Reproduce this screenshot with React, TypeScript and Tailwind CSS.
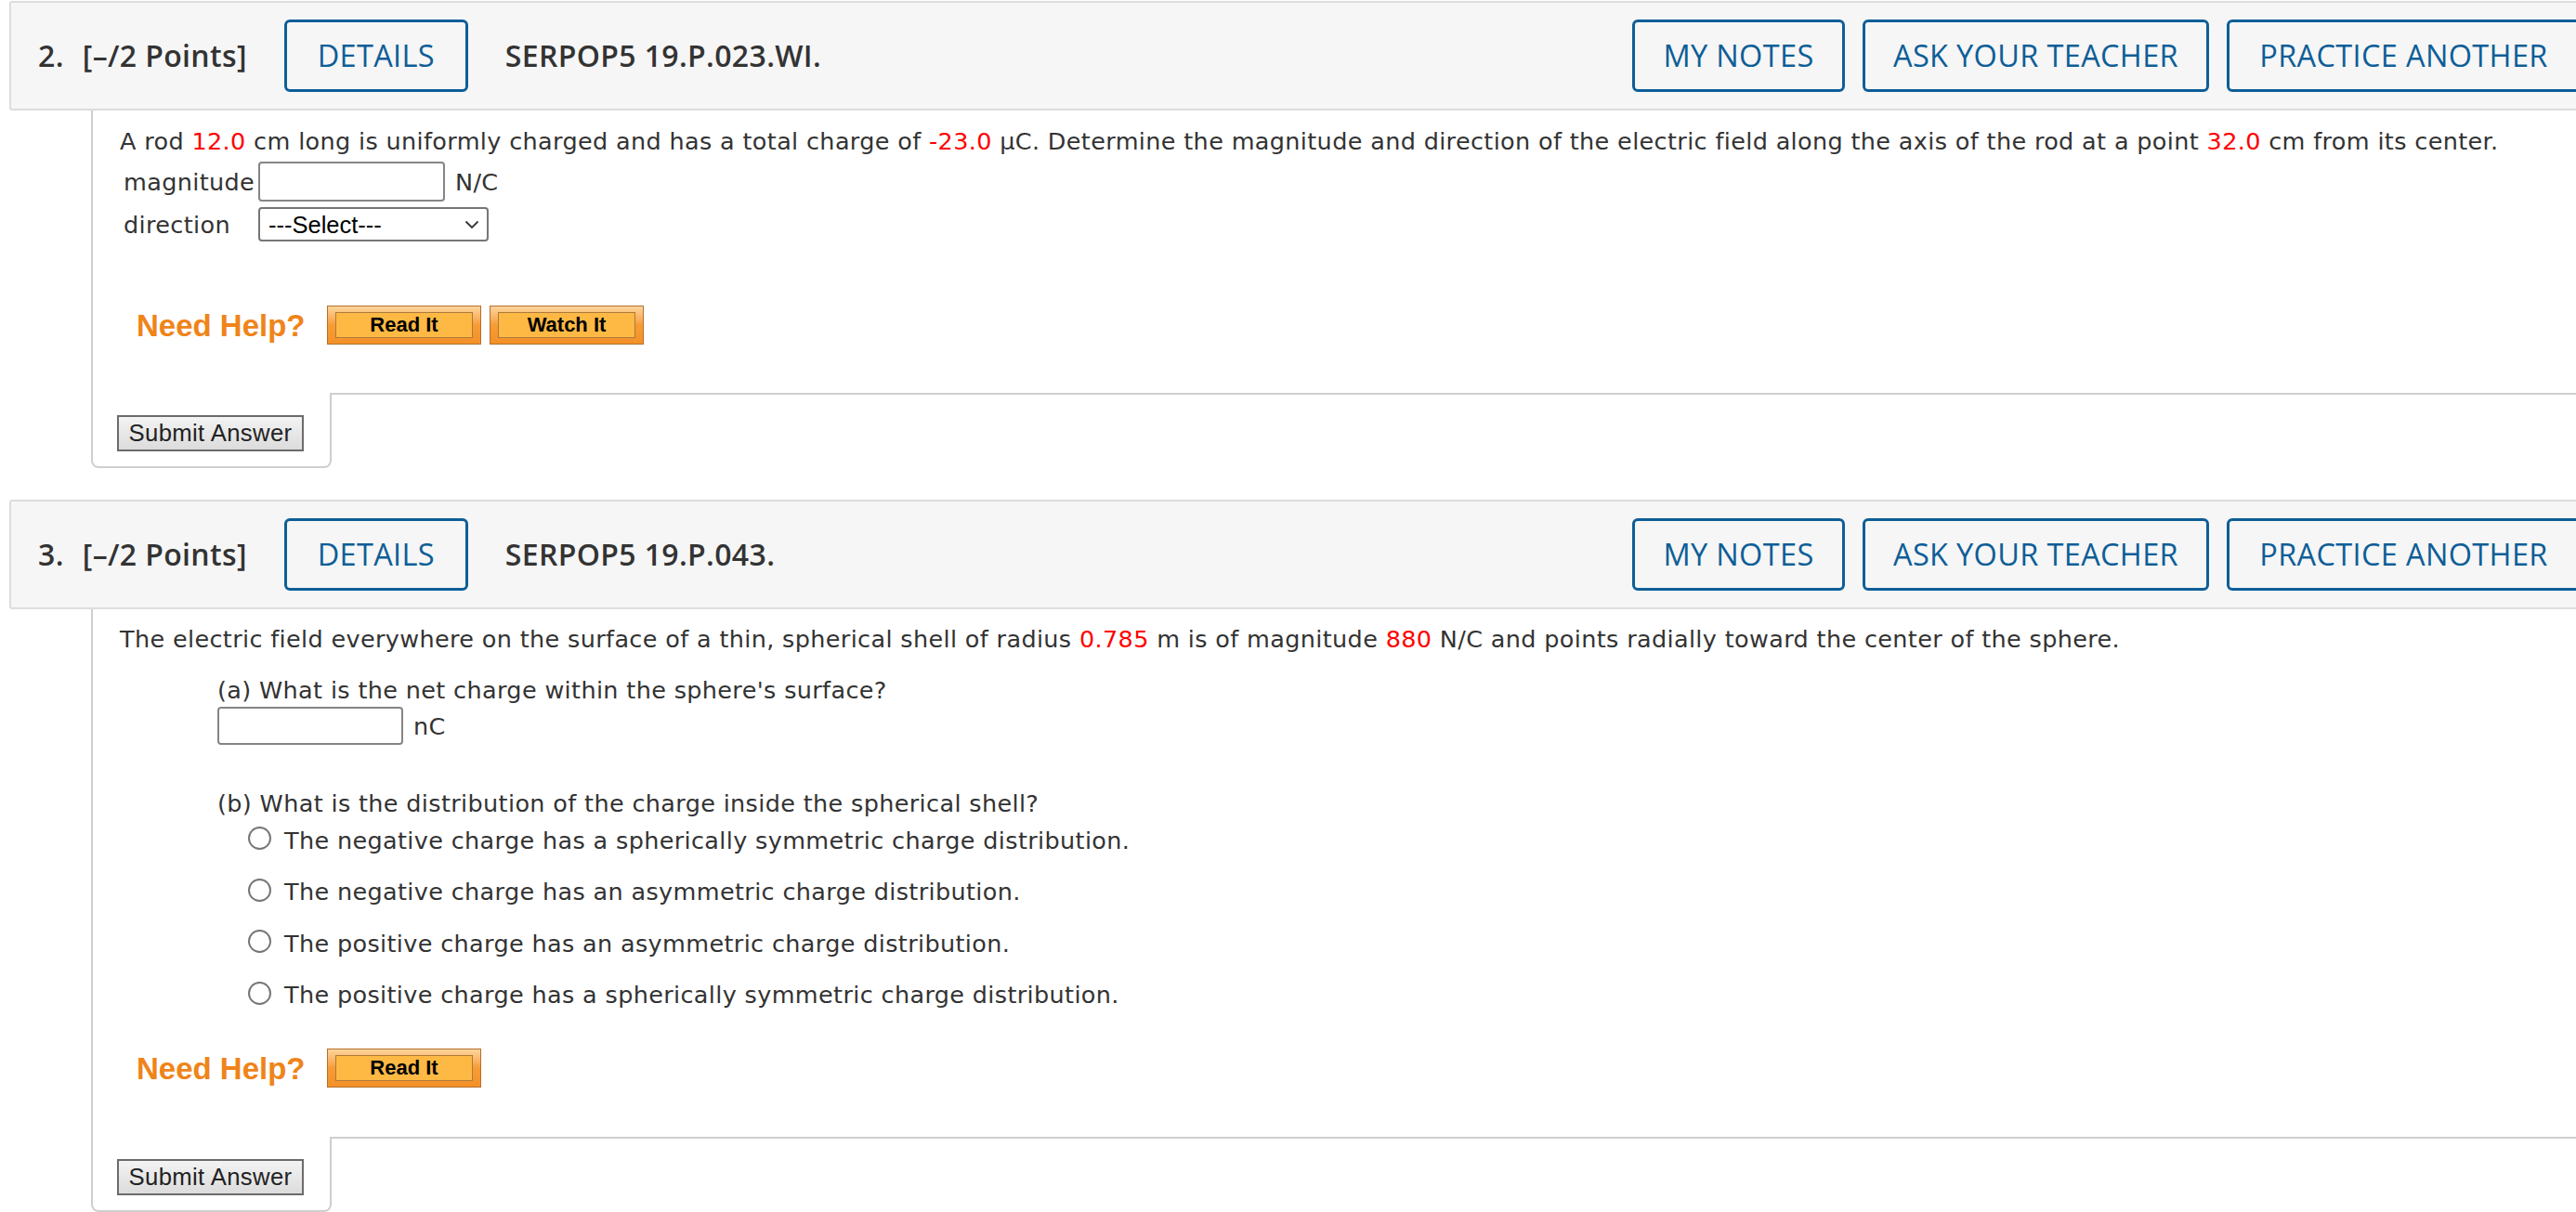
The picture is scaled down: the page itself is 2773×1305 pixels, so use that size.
import React from 'react';

const Red: React.FC<{ children: React.ReactNode }> = ({ children }) => (
  <span className="text-[#ff0000]">{children}</span>
);

const HeaderButton: React.FC<{ children: React.ReactNode; className?: string }> = ({ children, className = '' }) => (
  <div
    className={
      'h-[78px] border-[3px] border-[#0e5e97] rounded-[6px] flex items-center justify-center text-[#0e5e97] text-[32.5px] font-medium whitespace-nowrap ' +
      className
    }
  >
    {children}
  </div>
);

const QuestionHeader: React.FC<{ num: number; code: string }> = ({ num, code }) => (
  <div className="h-[118px] border-2 border-[#dddddd] bg-[#f6f6f6] rounded-[3px] flex items-center pl-[29px] pr-[30px] font-['Open_Sans',sans-serif]">
    <span className="text-[32px] font-semibold text-[#333]">{num}.</span>
    <span className="ml-[20px] text-[32px] font-semibold text-[#333] whitespace-nowrap">[–/2 Points]</span>
    <HeaderButton className="ml-[40px] w-[198px]">DETAILS</HeaderButton>
    <span className="ml-[40px] text-[32px] font-semibold text-[#333] whitespace-nowrap">{code}</span>
    <div className="ml-auto flex gap-[19px]">
      <HeaderButton className="w-[229px]">MY NOTES</HeaderButton>
      <HeaderButton className="w-[373px]">ASK YOUR TEACHER</HeaderButton>
      <HeaderButton className="w-[381px]">PRACTICE ANOTHER</HeaderButton>
    </div>
  </div>
);

const HelpButton: React.FC<{ label: string }> = ({ label }) => (
  <div className="w-[166px] h-[42px] border border-[#b5702c] bg-linear-to-b from-[#fdd59c] via-[#f79c33] to-[#f39028] px-[8px] py-[6px]">
    <div className="h-full border border-[#ad7a3c] bg-[#fdb944] flex items-center justify-center font-['Liberation_Sans',Arial,sans-serif] font-bold text-[22px] leading-none text-black">
      {label}
    </div>
  </div>
);

const NeedHelp: React.FC<{ buttons: string[]; className?: string }> = ({ buttons, className = '' }) => (
  <div className={'flex items-center ml-[18px] ' + className}>
    <span className="w-[205px] font-['Liberation_Sans',Arial,sans-serif] font-bold text-[33px] leading-none text-[#ef8419]">
      Need Help?
    </span>
    <div className="flex gap-[9px]">
      {buttons.map((b) => (
        <HelpButton key={b} label={b} />
      ))}
    </div>
  </div>
);

const SubmitTab: React.FC = () => (
  <div className="ml-[88px] flex">
    <div className="w-[259px] h-[81px] border-l-2 border-r-2 border-b-2 border-[#cfcfcf] rounded-b-[8px] pl-[26px] pt-[24px]">
      <div className="w-[201px] h-[39px] border-2 border-[#6b6b6b] bg-linear-to-b from-[#f3f3f3] to-[#dcdcdc] flex items-center justify-center font-['Liberation_Sans',Arial,sans-serif] text-[25.7px] leading-none text-[#222]">
        Submit Answer
      </div>
    </div>
    <div className="flex-1 border-t-2 border-[#cfcfcf]" />
  </div>
);

const TextBox: React.FC<{ className?: string }> = ({ className = '' }) => (
  <div className={'border-2 border-[#858585] rounded-[4px] bg-white ' + className} />
);

const Radio: React.FC<{ label: string }> = ({ label }) => (
  <div className="flex items-center h-[30px] pl-[138px]">
    <span className="w-[25px] h-[25px] rounded-full border-2 border-[#767676] bg-white mr-[14px] -mt-[4px]" />
    <span>{label}</span>
  </div>
);

const App: React.FC = () => {
  return (
    <div className="w-[2773px] h-[1305px] overflow-hidden bg-white font-['DejaVu_Sans',Verdana,sans-serif] text-[25.5px] tracking-[0.35px] leading-[30px] text-[#333]">
      {/* question 2 */}
      <div className="ml-[10px] mt-[1px] w-[2800px]">
        <QuestionHeader num={2} code="SERPOP5 19.P.023.WI." />
        <div className="ml-[88px] border-l-2 border-[#cfcfcf] pl-[29px] pt-[17.5px] pb-[52px]">
          <p className="whitespace-nowrap">
            A rod <Red>12.0</Red> cm long is uniformly charged and has a total charge of <Red>-23.0</Red> μC. Determine
            the magnitude and direction of the electric field along the axis of the rod at a point <Red>32.0</Red> cm
            from its center.
          </p>
          <div className="mt-[7.5px] flex items-center pl-[4px]">
            <span className="w-[145px]">magnitude</span>
            <TextBox className="w-[201px] h-[43px]" />
            <span className="ml-[11px]">N/C</span>
          </div>
          <div className="mt-[6px] flex items-center pl-[4px]">
            <span className="w-[145px]">direction</span>
            <div className="w-[248px] h-[37px] border-2 border-[#767676] rounded-[4px] bg-white flex items-center justify-between pl-[9px] pr-[8px] font-['Liberation_Sans',Arial,sans-serif] text-[25.5px] tracking-normal text-black">
              <span>---Select---</span>
              <svg width="16" height="10" viewBox="0 0 16 10" fill="none">
                <path d="M1.5 1.5 L8 8 L14.5 1.5" stroke="#333" strokeWidth="1.8" />
              </svg>
            </div>
          </div>
          <NeedHelp buttons={['Read It', 'Watch It']} className="mt-[69px] tracking-normal" />
        </div>
        <SubmitTab />
      </div>

      {/* question 3 */}
      <div className="ml-[10px] mt-[34px] w-[2800px]">
        <QuestionHeader num={3} code="SERPOP5 19.P.043." />
        <div className="ml-[88px] border-l-2 border-[#cfcfcf] pl-[29px] pt-[16.5px] pb-[53px]">
          <p className="whitespace-nowrap">
            The electric field everywhere on the surface of a thin, spherical shell of radius <Red>0.785</Red> m is of
            magnitude <Red>880</Red> N/C and points radially toward the center of the sphere.
          </p>
          <p className="mt-[25px] pl-[105px]">(a) What is the net charge within the sphere's surface?</p>
          <div className="mt-[3.5px] flex items-center pl-[105px]">
            <TextBox className="w-[200px] h-[41px]" />
            <span className="ml-[11px]">nC</span>
          </div>
          <p className="mt-[47.5px] pl-[105px]">(b) What is the distribution of the charge inside the spherical shell?</p>
          <div className="mt-[10px] flex flex-col gap-[25.5px]">
            <Radio label="The negative charge has a spherically symmetric charge distribution." />
            <Radio label="The negative charge has an asymmetric charge distribution." />
            <Radio label="The positive charge has an asymmetric charge distribution." />
            <Radio label="The positive charge has a spherically symmetric charge distribution." />
          </div>
          <NeedHelp buttons={['Read It']} className="mt-[43px] tracking-normal" />
        </div>
        <SubmitTab />
      </div>
    </div>
  );
};

export default App;
